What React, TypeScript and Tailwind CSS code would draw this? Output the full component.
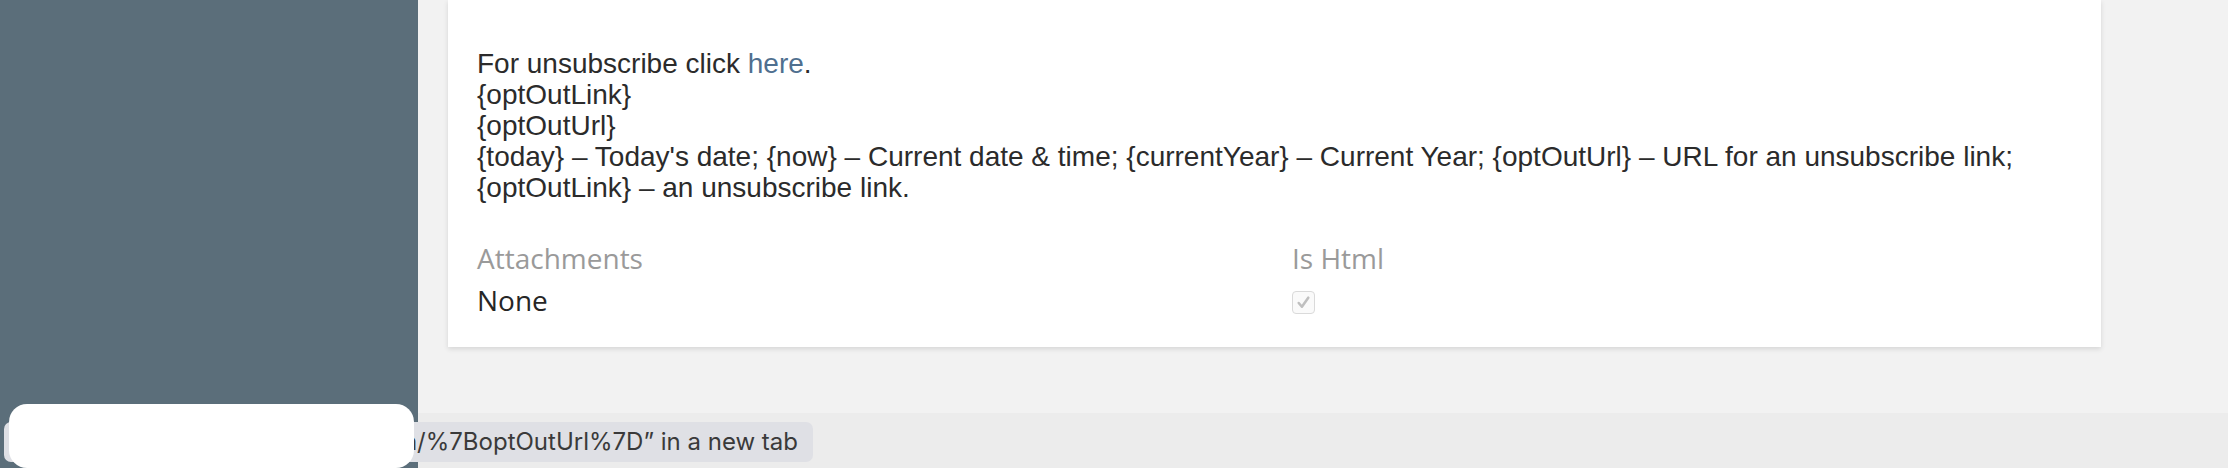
export default function App() {
  return (
    <div className="relative flex h-[468px] w-[2228px] overflow-hidden bg-[#f2f2f2]">
      {/* sidebar */}
      <div className="w-[418px] shrink-0 bg-[#5b6e7a]" />

      {/* main area */}
      <div className="flex flex-1 flex-col">
        <div className="flex-1 pl-[30px] pr-[127px]">
          <div className="bg-white px-[29px] pt-[48px] pb-[28px] shadow-[0_2px_5px_rgba(0,0,0,0.12)]">
            <div className="text-[28px] leading-[31px] text-[#2b2b2b] font-['Liberation_Sans',Arial,sans-serif]">
              <p>
                For unsubscribe click{" "}
                <a href="#" className="text-[#4f6f8f]">
                  here
                </a>
                .
              </p>
              <p>{"{optOutLink}"}</p>
              <p>{"{optOutUrl}"}</p>
              <p>
                {"{today}"} – Today's date; {"{now}"} – Current date &amp; time;{" "}
                {"{currentYear}"} – Current Year; {"{optOutUrl}"} – URL for an
                unsubscribe link; {"{optOutLink}"} – an unsubscribe link.
              </p>
            </div>

            <div className="mt-[36px] grid grid-cols-2 gap-x-[35px] font-['Open_Sans',sans-serif] text-[28px] leading-[38px]">
              <div>
                <div className="text-[#9a9a9a]">Attachments</div>
                <div className="mt-[4px] text-[#262626]">None</div>
              </div>
              <div>
                <div className="text-[#9a9a9a]">Is Html</div>
                <div className="mt-[4px] flex h-[38px] items-center pt-[4px]">
                  <span className="flex h-[23px] w-[23px] items-center justify-center rounded-[4px] border border-[#dadada] bg-[#fafafa]">
                    <svg viewBox="0 0 16 16" className="h-[17px] w-[17px]" fill="none">
                      <path
                        d="M3.5 8.5 L6.5 12 L12.5 3.5"
                        stroke="#bfbfbf"
                        strokeWidth="2.4"
                        strokeLinecap="round"
                        strokeLinejoin="round"
                      />
                    </svg>
                  </span>
                </div>
              </div>
            </div>
          </div>
        </div>

        {/* bottom strip */}
        <div className="h-[55px] shrink-0 bg-[#ececec]" />
      </div>

      {/* browser status bubble */}
      <div className="absolute left-[4px] top-[422px] flex h-[40px] w-[809px] items-center justify-end whitespace-nowrap rounded-[7px] bg-[#dfe0e5] pr-[15px] font-['Inter',sans-serif] text-[24px] text-[#3a3a3a]">
        n/%7BoptOutUrl%7D” in a new tab
      </div>

      {/* redaction box */}
      <div className="absolute left-[9px] top-[404px] h-[64px] w-[405px] rounded-[18px] bg-white" />
    </div>
  );
}
